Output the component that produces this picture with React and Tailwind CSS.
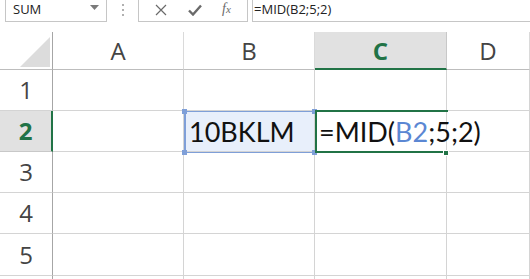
import React from "react";

const rows = [1, 2, 3, 4, 5, 6];
const cols = ["A", "B", "C", "D"];

export default function App() {
  return (
    <div className="w-[530px] h-[279px] overflow-hidden bg-white relative" style={{ fontFamily: '"Open Sans", "Noto Sans", sans-serif' }}>
      {/* Top bar */}
      <div className="h-[32px] flex items-start">
        <div className="ml-[5px] w-[102px] h-[22px] border border-t-0 border-[#c6c6c6] flex items-center justify-between pl-[7px] pr-[7px] text-[13px] text-[#222]">
          <span className="leading-none mt-[-2px]">SUM</span>
          <svg width="9" height="6" viewBox="0 0 9 6" className="mt-[-6px]"><path d="M0 0 L9 0 L4.5 5 Z" fill="#7a7a7a" /></svg>
        </div>
        <div className="w-[31px] h-[22px] flex flex-col items-center justify-center gap-[3px] pb-[3px]">
          <div className="w-[2px] h-[2px] bg-[#b0b0b0]" />
          <div className="w-[2px] h-[2px] bg-[#b0b0b0]" />
          <div className="w-[2px] h-[2px] bg-[#b0b0b0]" />
        </div>
        <div className="w-[110px] h-[22px] border border-t-0 border-[#c6c6c6] flex items-center justify-around px-[6px]">
          <svg width="12" height="12" viewBox="0 0 12 12" className="mt-[-2px]"><path d="M1 1 L11 11 M11 1 L1 11" stroke="#6a6a6a" strokeWidth="1.2" /></svg>
          <svg width="14" height="12" viewBox="0 0 14 12" className="mt-[-1px]"><path d="M1 6.5 L5 10.5 L13 1.5" stroke="#6a6a6a" strokeWidth="2.4" fill="none" /></svg>
          <span className="italic text-[#6a6a6a] text-[14px] leading-none mt-[-3px]" style={{ fontFamily: '"Liberation Serif", serif' }}>f<span className="text-[11px]">x</span></span>
        </div>
        <div className="ml-[4px] flex-1 h-[22px] border-l border-b border-[#c6c6c6] flex items-center pl-[1px] text-[13px] text-[#222]">
          <span className="leading-none mt-[-2px]">=MID(B2;5;2)</span>
        </div>
      </div>

      {/* Grid */}
      <div className="grid grid-cols-[53px_131px_131px_132px_1fr] grid-rows-[38px_41px_41px_41px_41px_42px_41px] relative">
        {/* corner */}
        <div className="border-r border-b border-r-[#a6a6a6] border-b-[#bdbdbd] relative">
          <svg width="53" height="38" viewBox="0 0 53 38" className="absolute inset-0"><path d="M20 35 L50 35 L50 5 Z" fill="#dcdcdc" /></svg>
        </div>
        {cols.map((c) => (
          <div
            key={c}
            className={
              c === "C"
                ? "bg-[#e1e1e1] border-r border-[#c8c8c8] border-b-2 border-b-[#217346] flex items-center justify-center text-[24px] font-bold text-[#217346]"
                : "border-r border-[#dadada] border-b border-b-[#bdbdbd] flex items-center justify-center text-[24px] text-[#444]"
            }
          >
            <span className="leading-none mt-[1px]">{c}</span>
          </div>
        ))}
        {rows.map((r) => (
          <React.Fragment key={r}>
            <div
              className={
                r === 2
                  ? "bg-[#e1e1e1] border-r-2 border-r-[#217346] border-b border-b-[#c8c8c8] flex items-center justify-center text-[24px] font-bold text-[#217346]"
                  : "border-r border-r-[#a6a6a6] border-b border-b-[#d4d4d4] flex items-center justify-center text-[24px] text-[#444]"
              }
            >
              {r <= 5 && <span className="leading-none">{r}</span>}
            </div>
            {cols.map((c) => (
              <div
                key={c}
                className={
                  r === 2 && c === "B"
                    ? "bg-[#e8effb] border-r border-b border-[#d4d4d4] flex items-center pl-[5px] text-[27px] text-[#111]"
                    : r === 2 && c === "C"
                    ? "border-r border-b border-[#d4d4d4] flex items-center pl-[4px] text-[27px] text-[#111] whitespace-nowrap overflow-visible"
                    : "border-r border-b border-[#d4d4d4]"
                }
                style={r === 2 && (c === "B" || c === "C") ? { fontFamily: 'Lato, "Open Sans", sans-serif' } : undefined}
              >
                {r === 2 && c === "B" && <span className="leading-none">10BKLM</span>}
                {r === 2 && c === "C" && (
                  <span className="leading-none">
                    =MID(<span className="text-[#5b87d3]">B2</span>;5;2)
                  </span>
                )}
              </div>
            ))}
          </React.Fragment>
        ))}

        {/* B2 selection (blue) */}
        <div className="absolute left-[184px] top-[79px] w-[131px] h-[42px] border-l-2 border-t border-b border-[#7f9fd8] pointer-events-none" />
        <div className="absolute left-[182px] top-[77px] w-[5px] h-[5px] bg-[#7f9fd8]" />
        <div className="absolute left-[182px] top-[118px] w-[5px] h-[5px] bg-[#7f9fd8]" />
        <div className="absolute left-[312px] top-[77px] w-[5px] h-[5px] bg-[#7f9fd8]" />
        <div className="absolute left-[312px] top-[118px] w-[5px] h-[5px] bg-[#7f9fd8]" />
        {/* C2 active (green) */}
        <div className="absolute left-[315px] top-[78px] w-[133px] h-[43px] border-l-2 border-t-2 border-b-2 border-[#217346] pointer-events-none" />
        <div className="absolute left-[443px] top-[118px] w-[6px] h-[6px] bg-[#217346] border border-white" />
      </div>
    </div>
  );
}
